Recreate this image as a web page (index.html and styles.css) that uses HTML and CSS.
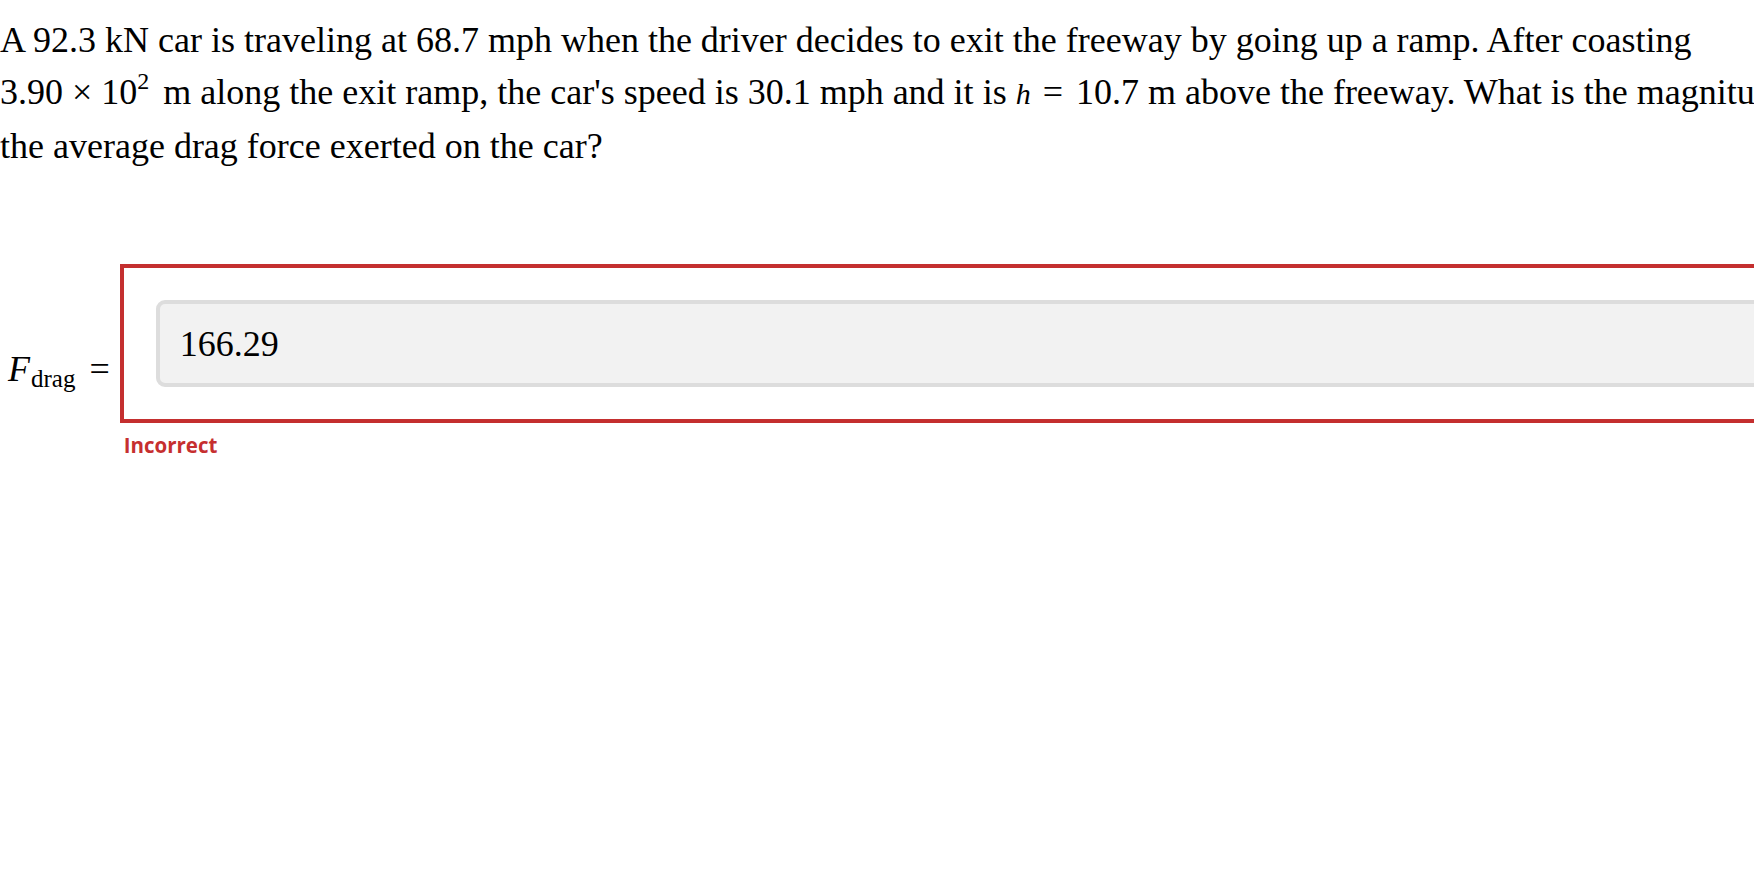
FILE: index.html
```html
<!DOCTYPE html>
<html lang="en">
<head>
<meta charset="utf-8">
<title>Drag force question</title>
<link rel="stylesheet" href="styles.css">
</head>
<body>
<div class="page">
  <p class="question">A 92.3 kN car is traveling at 68.7 mph when the driver decides to exit the freeway by going up a ramp. After coasting <span class="nowrap">3.90 × 10<sup class="exp">2</sup><span class="unit">m</span></span> along the exit ramp, the car's speed is 30.1 mph and it is <span class="nowrap"><i class="var">h</i><span class="rel">=</span></span> 10.7 m above the freeway. What is the magnitude of the average drag force exerted on the car?</p>

  <div class="answer-row">
    <div class="label"><i class="var-big">F</i><sub class="sub">drag</sub><span class="eq">=</span></div>
    <div class="answer-col">
      <div class="answer-box">
        <input class="answer-input" type="text" value="166.29" readonly>
      </div>
      <div class="feedback">Incorrect</div>
    </div>
  </div>
</div>
</body>
</html>
```

FILE: styles.css
```css
html, body {
  margin: 0;
  padding: 0;
  overflow: hidden;
  background: #ffffff;
}

.page {
  width: 1845px;
  color: #000000;
  font-family: "Liberation Serif", "Times New Roman", serif;
}

.question {
  margin: 14px 0 0 0;
  font-size: 36px;
  line-height: 52px;
}

.nowrap {
  white-space: nowrap;
}

.exp {
  font-size: 24px;
  line-height: 0;
  vertical-align: 15px;
}

.unit {
  margin-left: 14px;
}

.var {
  font-size: 30px;
}

.rel {
  margin: 0 4px 0 12px;
}

.answer-row {
  display: flex;
  align-items: center;
  margin-top: 92px;
}

.label {
  font-size: 36px;
  line-height: 42px;
  padding-left: 8px;
  margin-right: 10px;
  white-space: nowrap;
}

.var-big {
  font-style: italic;
}

.sub {
  font-size: 25px;
  line-height: 0;
  vertical-align: -6px;
  margin-left: 1px;
}

.eq {
  margin-left: 14px;
}

.answer-col {
  flex: 0 0 1700px;
}

.answer-box {
  border: 4px solid #c42f2f;
  padding: 32px;
}

.answer-input {
  display: block;
  width: 100%;
  box-sizing: border-box;
  height: 87px;
  margin: 0;
  padding: 0 20px;
  border: 4px solid #dddddd;
  border-radius: 9px;
  background: #f2f2f2;
  color: #000000;
  font-family: "Liberation Serif", "Times New Roman", serif;
  font-size: 36px;
  outline: none;
}

.feedback {
  margin-top: 8px;
  padding: 0 0 15px 4px;
  font-family: "Open Sans", "Noto Sans", sans-serif;
  font-weight: 700;
  font-size: 20.5px;
  line-height: 28px;
  color: #c62f2f;
}
```
